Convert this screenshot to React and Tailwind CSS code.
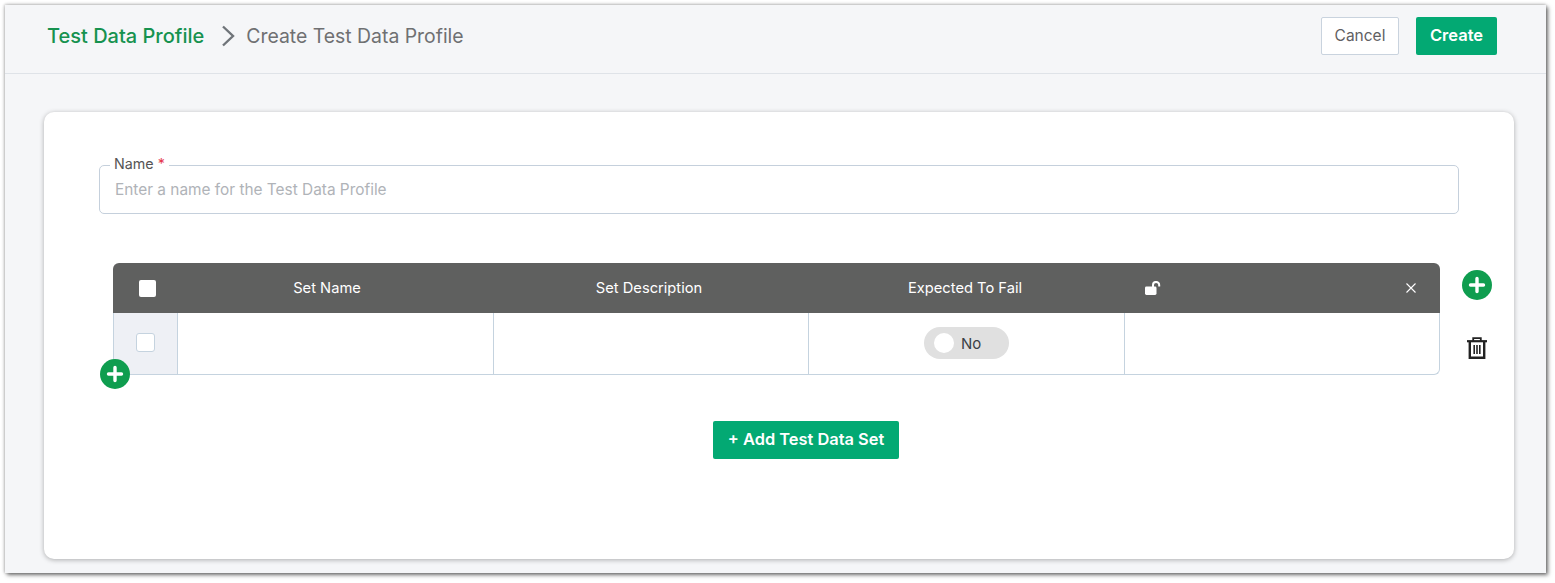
import React from "react";

function PlusCircle({ className = "" }) {
  return (
    <svg viewBox="0 0 30 30" className={`w-[30px] h-[30px] ${className}`}>
      <circle cx="15" cy="15" r="15" fill="#0f9d4f" />
      <path d="M15 8.5v13M8.5 15h13" stroke="#fff" strokeWidth="3.4" strokeLinecap="round" />
    </svg>
  );
}

function Trash() {
  return (
    <svg viewBox="0 0 20 22" className="w-[20px] h-[22px]">
      <path d="M0 4.2h20" stroke="#222" strokeWidth="2.2" />
      <path d="M6.2 4V1.1h7.6V4" fill="none" stroke="#222" strokeWidth="1.8" />
      <path d="M2.8 4.5v16.2h14.4V4.5" fill="none" stroke="#222" strokeWidth="2.4" />
      <path d="M7.2 8v9M10 8v9M12.8 8v9" stroke="#222" strokeWidth="1.6" />
    </svg>
  );
}

function LockOpen() {
  return (
    <svg viewBox="0 0 16 14" className="w-[16px] h-[14px]">
      <rect x="0" y="5.5" width="11.5" height="8.5" rx="1.4" fill="#fff" />
      <path d="M8 6V4a3 3 0 0 1 6.2 0v1.6" fill="none" stroke="#fff" strokeWidth="2" />
    </svg>
  );
}

export default function App() {
  return (
    <div className="w-[1555px] h-[583px] bg-white pl-[5px] pt-[5px] overflow-hidden font-['Inter',sans-serif]">
      <div className="w-[1541px] h-[568px] bg-[#f5f6f8] shadow-[2px_2px_4px_rgba(0,0,0,0.55),0_-1px_3px_rgba(0,0,0,0.15),-1px_0_3px_rgba(0,0,0,0.15)]">
        <header className="h-[69px] border-b border-[#dfe3e8] flex items-center pl-[42px] pr-[49px] pb-[6px]">
          <span className="text-[20px] leading-[28px] font-medium text-[#16924f]">Test Data Profile</span>
          <svg viewBox="0 0 14 22" className="w-[14px] h-[22px] ml-[17px] mr-[11px]">
            <path d="M2 1.5L12 11 2 20.5" fill="none" stroke="#6f7479" strokeWidth="2.4" />
          </svg>
          <span className="text-[19.4px] leading-[28px] text-[#6f7072]">Create Test Data Profile</span>
          <button className="ml-auto w-[78px] h-[38px] bg-white border border-[#c9d3de] rounded-[2px] text-[15.5px] text-[#5f6062]">
            Cancel
          </button>
          <button className="ml-[17px] w-[81px] h-[38px] bg-[#03a973] rounded-[2px] text-[16.5px] font-semibold text-white pb-[2px]">
            Create
          </button>
        </header>

        <main className="ml-[39px] mt-[38px] w-[1470px] h-[447px] bg-white rounded-[10px] shadow-[0_1px_5px_rgba(0,0,0,0.3)] pl-[55px] pr-[22px] pt-[53px]">
          <div className="relative h-[49px] mr-[33px] border border-[#c5d0dc] rounded-[5px] flex items-center pl-[15px]">
            <label className="absolute left-[10px] -top-[11px] bg-white px-[4px] text-[14.3px] leading-[18px] font-normal text-[#555]">
              Name <span className="text-[#e53950]">*</span>
            </label>
            <span className="text-[15.4px] text-[#b0b3b8] pt-[1px]">Enter a name for the Test Data Profile</span>
          </div>

          <div className="flex mt-[49px] ml-[14px]">
            <div className="relative w-[1327px]">
              <div className="h-[50px] bg-[#5f605f] rounded-t-[6px] grid grid-cols-[57px_314px_330px_302px_1fr] items-center text-white text-[14.7px] leading-[20px]">
                <div className="pl-[26px]">
                  <div className="w-[17px] h-[17px] bg-white rounded-[2px]" />
                </div>
                <div className="text-center">Set Name</div>
                <div className="text-center">Set Description</div>
                <div className="text-center">Expected To Fail</div>
                <div className="flex items-center justify-between pl-[29px] pr-[24px]">
                  <LockOpen />
                  <svg viewBox="0 0 10 10" className="w-[10px] h-[10px]">
                    <path d="M0.5 0.5l9 9M9.5 0.5l-9 9" stroke="#fff" strokeWidth="1.1" />
                  </svg>
                </div>
              </div>
              <div className="h-[62px] border-x border-b border-[#c5d3df] rounded-b-[6px] grid grid-cols-[64px_316px_315px_316px_1fr]">
                <div className="bg-[#eef0f5] border-r border-[#c5d3df] rounded-bl-[6px] flex items-center justify-center pb-[3px] pr-[1px]">
                  <div className="w-[19px] h-[19px] bg-white border border-[#c5d3df] rounded-[3px]" />
                </div>
                <div className="border-r border-[#c5d3df]" />
                <div className="border-r border-[#c5d3df]" />
                <div className="border-r border-[#c5d3df] flex items-center justify-center pb-[1px]">
                  <div className="w-[85px] h-[32px] rounded-full bg-[#e0e0e0] flex items-center pl-[10px]">
                    <div className="w-[20px] h-[20px] rounded-full bg-white" />
                    <span className="ml-[7px] text-[15px] leading-[22px] text-[#3a3f47] pt-[1px]">No</span>
                  </div>
                </div>
                <div />
              </div>
              <PlusCircle className="absolute -left-[13px] top-[96px]" />
            </div>
            <div className="ml-[22px] w-[30px] flex flex-col items-center pt-[7px]">
              <PlusCircle />
              <div className="mt-[37px] mr-[1px]">
                <Trash />
              </div>
            </div>
          </div>

          <button className="block mt-[46px] ml-[614px] w-[186px] h-[38px] bg-[#03a973] rounded-[2px] text-[16.4px] font-semibold text-white pb-[2px]">
            + Add Test Data Set
          </button>
        </main>
      </div>
    </div>
  );
}
